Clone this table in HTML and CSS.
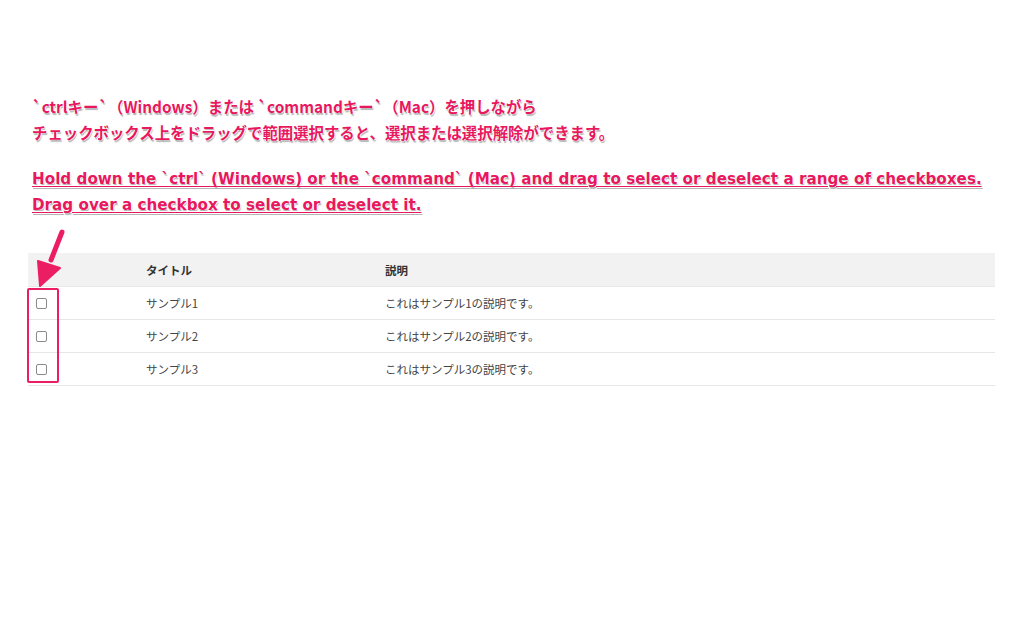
FILE: index.html
```html
<!DOCTYPE html>
<html lang="ja">
<head>
<meta charset="utf-8">
<title>Checkbox drag select</title>
<link rel="stylesheet" href="styles.css">
</head>
<body>
<div class="page">
  <div class="notes">
    <p class="note ja">`ctrlキー`（Windows）または `commandキー`（Mac）を押しながら<br>チェックボックス上をドラッグで範囲選択すると、選択または選択解除ができます。</p>
    <p class="note en">Hold down the `ctrl` (Windows) or the `command` (Mac) and drag to select or deselect a range of checkboxes.<br>Drag over a checkbox to select or deselect it.</p>
  </div>
  <div class="table-wrap">
    <table class="tbl">
      <thead>
        <tr><th class="c-check"></th><th class="c-title">タイトル</th><th>説明</th></tr>
      </thead>
      <tbody>
        <tr><td class="c-check"><span class="cb"></span></td><td class="c-title">サンプル1</td><td>これはサンプル1の説明です。</td></tr>
        <tr><td class="c-check"><span class="cb"></span></td><td class="c-title">サンプル2</td><td>これはサンプル2の説明です。</td></tr>
        <tr><td class="c-check"><span class="cb"></span></td><td class="c-title">サンプル3</td><td>これはサンプル3の説明です。</td></tr>
      </tbody>
    </table>
    <div class="hl-box"></div>
    <svg class="arrow" width="50" height="66" viewBox="0 0 50 66">
      <path d="M34 4 L23 32" stroke="#ec1e63" stroke-width="5" stroke-linecap="round" fill="none"/>
      <path d="M12 58 L10 33 L32 40 Z" fill="#ec1e63" stroke="#ec1e63" stroke-width="2" stroke-linejoin="round"/>
    </svg>
  </div>
</div>
</body>
</html>
```

FILE: styles.css
```css
html, body {
  margin: 0;
  padding: 0;
  background: #ffffff;
}
.page {
  padding: 94px 25px 0 28px;
  font-family: "Noto Sans CJK JP", "Liberation Sans", sans-serif;
}
.notes {
  padding-left: 4px;
}
.note {
  margin: 0;
  font-weight: 700;
  color: #e8185e;
  line-height: 25.5px;
  white-space: nowrap;
  text-shadow: -1px 0 0 #fff, 1px 0 0 #fff, 0 -1px 0 #fff, 1px 2px 1px rgba(90, 90, 90, 0.45);
}
.note.ja {
  font-size: 15.4px;
}
.note.en {
  margin-top: 22px;
  font-family: "DejaVu Sans", "Liberation Sans", sans-serif;
  font-size: 15.2px;
  text-decoration: underline;
  text-decoration-thickness: 1px;
  text-underline-offset: 2px;
}
.table-wrap {
  position: relative;
  margin-top: 35px;
}
.tbl {
  width: 967px;
  border-collapse: collapse;
  font-size: 11.5px;
  color: #333;
}
.tbl th {
  background: #f2f2f2;
  text-align: left;
  font-weight: 700;
  height: 33px;
  padding: 0 10px;
  border-bottom: 1px solid #e8e8e8;
}
.tbl td {
  height: 32px;
  padding: 0 10px;
  border-bottom: 1px solid #e6e6e6;
  color: #444;
}
.tbl .c-check {
  width: 90px;
  padding-left: 8px;
}
.tbl .c-title {
  width: 219px;
}
.cb {
  display: block;
  width: 9px;
  height: 9px;
  border: 1px solid #8a8a8a;
  border-radius: 2px;
  background: #fff;
}
.hl-box {
  position: absolute;
  left: -1px;
  top: 35px;
  width: 28px;
  height: 91px;
  border: 2px solid #ec1e63;
  border-radius: 2px;
}
.arrow {
  position: absolute;
  left: 0;
  top: -25px;
}
```
